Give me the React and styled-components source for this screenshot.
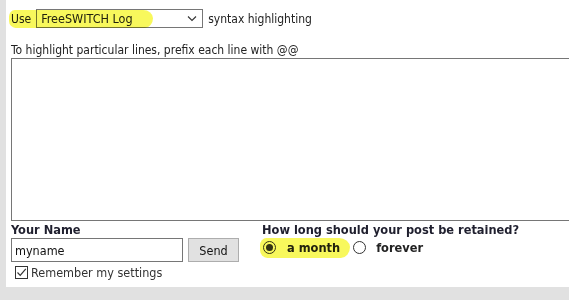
import React, { useState } from 'react'
import styled, { createGlobalStyle } from 'styled-components'

const GlobalStyle = createGlobalStyle`
  html, body {
    margin: 0;
    padding: 0;
    background: #e1e1e1;
    overflow: hidden;
  }
  body {
    font-family: "DejaVu Sans Condensed", "DejaVu Sans", Verdana, sans-serif;
    font-size: 12px;
    color: #222;
  }
`

const Page = styled.div`
  width: 569px;
  height: 300px;
  background: #e1e1e1;
`

const Panel = styled.form`
  margin-left: 6px;
  width: 563px;
  height: 287px;
  background: #fff;
  padding: 9px 0 0 5px;
  box-sizing: border-box;
  overflow: hidden;
`

const Row = styled.div`
  display: flex;
  align-items: center;
  gap: ${p => p.gap || 0}px;
  height: ${p => p.h || 'auto'};
`

const Highlight = styled.span`
  position: relative;
  display: inline-flex;
  align-items: center;
  &::before {
    content: '';
    position: absolute;
    left: ${p => p.l}px;
    right: ${p => p.r}px;
    top: ${p => p.t}px;
    bottom: ${p => p.b}px;
    background: #f8f85c;
    border-radius: 7px 12px 10px 8px / 8px 10px 12px 9px;
    mix-blend-mode: multiply;
    pointer-events: none;
    z-index: 2;
  }
`

const SelectBox = styled.div`
  position: relative;
  width: 167px;
  height: 19px;
  box-sizing: border-box;
  border: 1px solid #767676;
  background: #fff;
  display: flex;
  align-items: center;
  padding-left: 4px;
  margin-left: 5px;
  color: #222;
  font-size: 12.5px;
  svg {
    position: absolute;
    right: 5px;
    top: 5px;
  }
`

const Hint = styled.div`
  margin-top: 15px;
  height: 14px;
  line-height: 14px;
`

const TextArea = styled.textarea`
  display: block;
  margin-top: 1px;
  width: 600px;
  height: 163px;
  box-sizing: border-box;
  border: 1px solid #767676;
  resize: none;
  outline: none;
  font-family: inherit;
`

const Bottom = styled.div`
  display: grid;
  grid-template-columns: 251px 1fr;
  margin-top: 1px;
`

const Col = styled.div`
  display: flex;
  flex-direction: column;
`

const FieldLabel = styled.div`
  font-weight: bold;
  font-size: 12.7px;
  height: 15px;
  line-height: 15px;
  color: #1f1f2e;
`

const NameInput = styled.input`
  width: 172px;
  height: 24px;
  box-sizing: border-box;
  border: 1px solid #767676;
  padding: 0 3px;
  font-family: inherit;
  font-size: 12.5px;
  color: #111;
  outline: none;
`

const SendButton = styled.button`
  width: 51px;
  height: 24px;
  box-sizing: border-box;
  border: 1px solid #adadad;
  background: #e1e1e1;
  font-family: inherit;
  font-size: 12.5px;
  color: #111;
  padding: 0;
`

const CheckRow = styled.label`
  display: flex;
  align-items: center;
  gap: 3px;
  margin-top: 3px;
  margin-left: 4px;
  height: 14px;
  color: #333;
  font-size: 12.5px;
`

const Check = styled.span`
  width: 13px;
  height: 13px;
  box-sizing: border-box;
  border: 1px solid #333;
  background: #fff;
  display: inline-flex;
  align-items: center;
  justify-content: center;
`

const Radio = styled.span`
  width: 13px;
  height: 13px;
  box-sizing: border-box;
  border-radius: 50%;
  border: 1px solid #333;
  background: #fff;
  display: inline-flex;
  align-items: center;
  justify-content: center;
  margin-left: ${p => p.ml || 0}px;
  &::after {
    content: '';
    width: 7px;
    height: 7px;
    border-radius: 50%;
    background: ${p => (p.checked ? '#333' : 'transparent')};
  }
`

const RadioText = styled.span`
  font-weight: bold;
  font-size: 12.7px;
  color: #222;
  margin-left: ${p => p.ml}px;
`

export default function App() {
  const [name, setName] = useState('myname')
  const [keep, setKeep] = useState('month')

  return (
    <Page>
      <GlobalStyle />
      <Panel onSubmit={e => e.preventDefault()}>
        <Row h="19px">
          <span>Use</span>
          <Highlight l={-22} r={50} t={1} b={0}>
            <SelectBox>
              FreeSWITCH Log
              <svg width="10" height="7" viewBox="0 0 10 7">
                <path d="M1 1.5 L5 5.5 L9 1.5" fill="none" stroke="#333" strokeWidth="1.1" />
              </svg>
            </SelectBox>
          </Highlight>
          <span style={{ marginLeft: 5 }}>syntax highlighting</span>
        </Row>
        <Hint>To highlight particular lines, prefix each line with @@</Hint>
        <TextArea />
        <Bottom>
          <Col>
            <FieldLabel>Your Name</FieldLabel>
            <Row gap={5} style={{ marginTop: 1 }}>
              <NameInput value={name} onChange={e => setName(e.target.value)} />
              <SendButton type="submit">Send</SendButton>
            </Row>
            <CheckRow>
              <Check>
                <svg width="11" height="11" viewBox="0 0 11 11">
                  <path d="M1.5 5.5 L4.2 8.3 L9.8 1.8" fill="none" stroke="#333" strokeWidth="1.2" />
                </svg>
              </Check>
              Remember my settings
            </CheckRow>
          </Col>
          <Col>
            <FieldLabel>How long should your post be retained?</FieldLabel>
            <Row style={{ marginTop: 1, height: 18 }}>
              <Highlight l={-2} r={-10} t={-2} b={-3} onClick={() => setKeep('month')}>
                <Radio checked={keep === 'month'} ml={1} />
                <RadioText ml={11}>a month</RadioText>
              </Highlight>
              <Radio checked={keep === 'forever'} onClick={() => setKeep('forever')} ml={13} />
              <RadioText ml={10}>forever</RadioText>
            </Row>
          </Col>
        </Bottom>
      </Panel>
    </Page>
  )
}
